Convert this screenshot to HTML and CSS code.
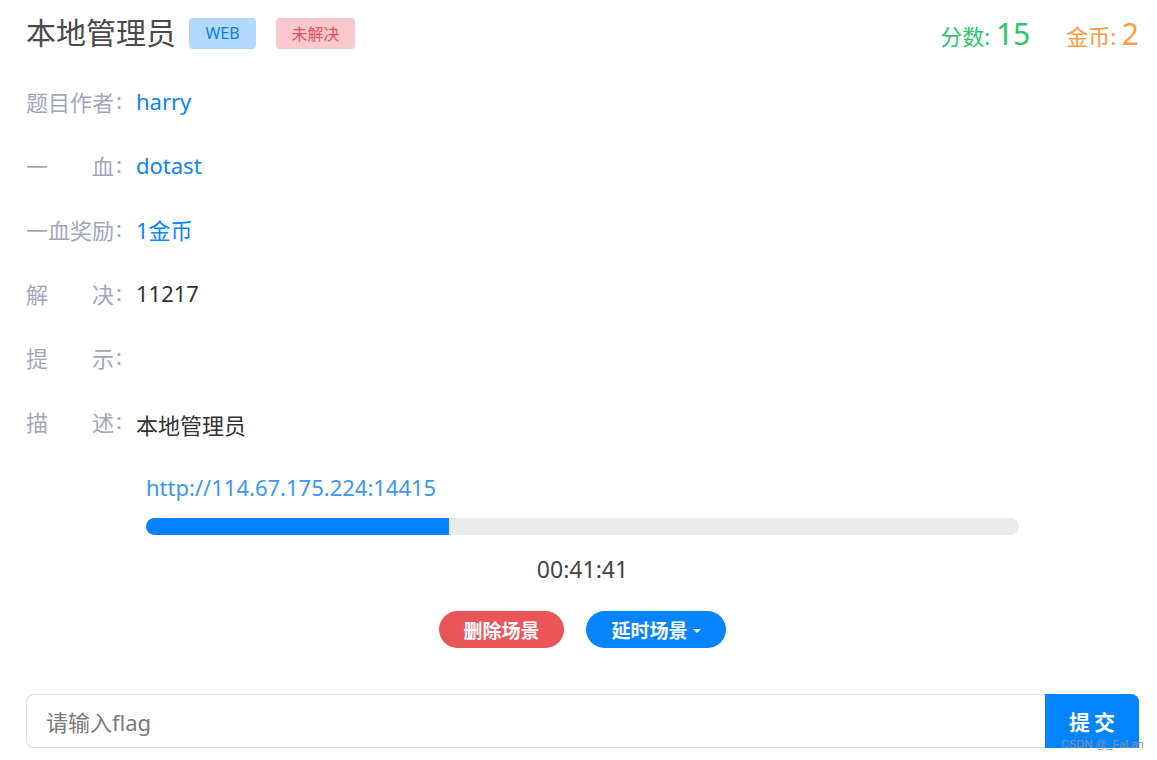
FILE: index.html
```html
<!DOCTYPE html>
<html lang="zh">
<head>
<meta charset="utf-8">
<link rel="stylesheet" href="styles.css">
</head>
<body>
<div class="page">
  <div class="header">
    <h1 class="title">本地管理员</h1>
    <span class="badge badge-web">WEB</span>
    <span class="badge badge-unsolved">未解决</span>
    <div class="stats">
      <span class="stat stat-score">分数: <b>15</b></span>
      <span class="stat stat-coin">金币: <b>2</b></span>
    </div>
  </div>

  <div class="row"><span class="label"><span class="name">题目作者</span>:</span><span class="value link">harry</span></div>
  <div class="row"><span class="label"><span class="name">一血</span>:</span><span class="value link">dotast</span></div>
  <div class="row"><span class="label"><span class="name">一血奖励</span>:</span><span class="value link">1金币</span></div>
  <div class="row"><span class="label"><span class="name">解决</span>:</span><span class="value">11217</span></div>
  <div class="row"><span class="label"><span class="name">提示</span>:</span><span class="value"></span></div>
  <div class="row row-desc"><span class="label"><span class="name">描述</span>:</span><span class="value desc">本地管理员</span></div>

  <div class="scene">
    <a class="scene-url">http://114.67.175.224:14415</a>
    <div class="progress"><div class="progress-fill" style="width:34.7%"></div></div>
    <div class="timer">00:41:41</div>
    <div class="actions">
      <button class="btn btn-red">删除场景</button>
      <button class="btn btn-blue">延时场景<span class="caret"></span></button>
    </div>
  </div>

  <div class="flag-form">
    <div class="flag-input">请输入flag</div>
    <button class="flag-submit">提交</button>
  </div>
  <div class="watermark">CSDN @_FaLan</div>
</div>
</body>
</html>
```

FILE: styles.css
```css
* { box-sizing: border-box; }
html, body { margin: 0; padding: 0; background: #fff; }
body {
  font-family: "Noto Sans", "Noto Sans CJK SC", sans-serif;
  color: #333;
  width: 1157px;
  height: 760px;
  overflow: hidden;
}
.page {
  position: relative;
  padding: 0 18px 0 26px;
  height: 760px;
}
.header {
  display: flex;
  align-items: center;
  height: 66px;
  margin-bottom: 3px;
}
.title {
  margin: 0;
  font-size: 30px;
  font-weight: 400;
  color: #4a4a4a;
  line-height: 1;
  margin-right: 13px;
}
.badge {
  display: inline-flex;
  align-items: center;
  justify-content: center;
  height: 31px;
  border-radius: 4px;
  font-size: 16px;
}
.badge-web { width: 67px; background: #b3d9ff; color: #0a7cf0; }
.badge-unsolved { width: 79px; background: #f9c8cc; color: #e8525c; margin-left: 20px; }
.stats { margin-left: auto; display: flex; align-items: baseline; gap: 36px; }
.stat { font-size: 22px; }
.stat b { font-weight: 400; font-size: 30px; }
.stat-score { color: #2bc76e; }
.stat-coin { color: #ff9c43; }

.row {
  display: flex;
  align-items: center;
  height: 64px;
  font-size: 22px;
}
.label {
  display: flex;
  color: #a3a6bd;
  margin-right: 14px;
  width: 96px;
}
.name {
  width: 88px;
  text-align: justify;
  text-align-last: justify;
  margin-right: 2px;
}
.value { color: #333; }
.value.link { color: #0a84ff; }
.row-desc .desc { padding-top: 6px; }

.scene {
  margin: 0 120px;
  display: flex;
  flex-direction: column;
}
.scene-url {
  font-size: 22px;
  color: #3a97f5;
  line-height: 1;
  margin-top: 23px;
}
.progress {
  margin-top: 20px;
  height: 17px;
  background: #e8ebee;
  border-radius: 9px;
  overflow: hidden;
}
.progress-fill { height: 100%; background: #0583ff; }
.timer {
  text-align: center;
  font-size: 23px;
  color: #444;
  margin-top: 23px;
  line-height: 1;
}
.actions {
  display: flex;
  justify-content: center;
  gap: 22px;
  margin-top: 30px;
}
.btn {
  height: 37px;
  border: none;
  border-radius: 19px;
  color: #fff;
  font-family: "Noto Sans CJK SC", sans-serif;
  font-weight: 700;
  font-size: 19px;
  display: inline-flex;
  align-items: center;
  justify-content: center;
  padding: 0;
}
.btn-red { width: 125px; background: #ea5658; }
.btn-blue { width: 140px; background: #0584ff; }
.caret {
  display: inline-block;
  width: 0; height: 0;
  border-left: 4px solid transparent;
  border-right: 4px solid transparent;
  border-top: 4px solid #fff;
  margin-left: 5px;
  margin-top: 2px;
}

.flag-form {
  display: flex;
  margin-top: 46px;
  height: 54px;
}
.flag-input {
  flex: 1;
  border: 1px solid #dcdcdc;
  border-right: none;
  border-radius: 8px 0 0 8px;
  padding-left: 19px;
  display: flex;
  align-items: center;
  font-size: 22px;
  color: #7a7a7a;
}
.flag-submit {
  width: 94px;
  border: none;
  background: #0584ff;
  color: #fff;
  border-radius: 0 8px 0 0;
  font-family: "Noto Sans CJK SC", sans-serif;
  font-weight: 700;
  font-size: 21px;
  letter-spacing: 4px;
  padding: 0 0 0 4px;
}
.watermark {
  position: absolute;
  left: 1061px;
  top: 738px;
  font-family: "Liberation Sans", sans-serif;
  font-size: 11px;
  color: #8a8f99;
}
```
